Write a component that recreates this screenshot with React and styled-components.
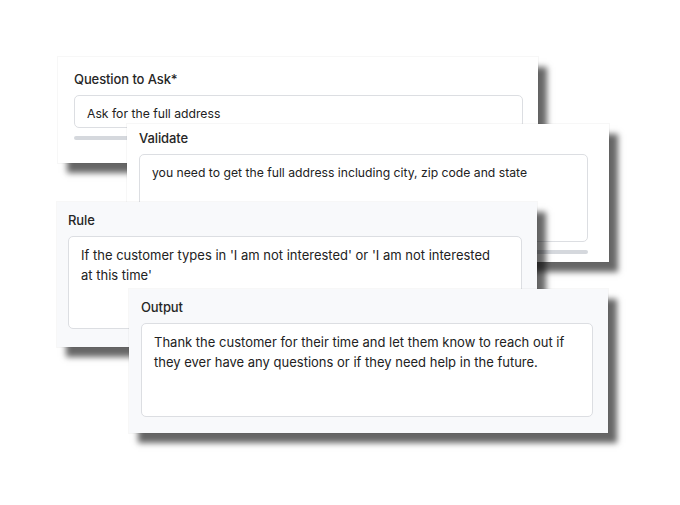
import styled, { createGlobalStyle } from "styled-components";

const GlobalStyle = createGlobalStyle`
  html, body {
    margin: 0;
    padding: 0;
    background: #ffffff;
  }
  body {
    font-family: "Inter", "Noto Sans", sans-serif;
    color: #222222;
  }
`;

const cards = [
  {
    label: "Question to Ask*",
    value: "Ask for the full address",
    x: 58, y: 57, w: 480, h: 106,
    pad: "14px 15px 0 16px",
    field: 33,
    size: 12.2,
    bar: true,
    tint: false,
  },
  {
    label: "Validate",
    value: "you need to get the full address including city, zip code and state",
    x: 127, y: 124, w: 482, h: 138,
    pad: "6px 21px 0 12px",
    field: 88,
    size: 12.2,
    bar: true,
    tint: false,
  },
  {
    label: "Rule",
    value:
      "If the customer types in 'I am not interested' or 'I am not interested\nat this time'",
    x: 57, y: 202, w: 480, h: 145,
    pad: "10px 15px 0 11px",
    field: 93,
    size: 13,
    bar: false,
    tint: true,
  },
  {
    label: "Output",
    value:
      "Thank the customer for their time and let them know to reach out if\nthey ever have any questions or if they need help in the future.",
    x: 129, y: 289, w: 479, h: 144,
    pad: "10px 15px 0 12px",
    field: 94,
    size: 13,
    bar: false,
    tint: true,
  },
];

export default function App() {
  return (
    <>
      <GlobalStyle />
      <Canvas>
        {cards.map((c) => (
          <Card
            key={c.label}
            $x={c.x}
            $y={c.y}
            $w={c.w}
            $h={c.h}
            $pad={c.pad}
            $tint={c.tint}
          >
            <Label>{c.label}</Label>
            <Field $h={c.field} $size={c.size}>
              {c.value}
            </Field>
            {c.bar && <Bar />}
          </Card>
        ))}
      </Canvas>
    </>
  );
}

const Canvas = styled.div`
  position: relative;
  width: 680px;
  height: 505px;
  overflow: hidden;
  background: #ffffff;
`;

const Card = styled.div`
  position: absolute;
  left: ${(p) => p.$x}px;
  top: ${(p) => p.$y}px;
  width: ${(p) => p.$w}px;
  height: ${(p) => p.$h}px;
  box-sizing: border-box;
  padding: ${(p) => p.$pad};
  display: flex;
  flex-direction: column;
  background: ${(p) => (p.$tint ? "#f8f9fb" : "#ffffff")};
  box-shadow: 0 0 0 1px rgba(0, 0, 0, 0.03), 9px 10px 6px rgba(0, 0, 0, 0.6);
`;

const Label = styled.div`
  font-size: 13px;
  font-weight: 500;
  line-height: 16px;
  letter-spacing: -0.1px;
  color: #262626;
  margin-bottom: 8px;
`;

const Field = styled.div`
  box-sizing: border-box;
  height: ${(p) => p.$h}px;
  padding: 8px 12px 7px 12px;
  background: #ffffff;
  border: 1px solid #dcdee2;
  border-radius: 5px;
  font-size: ${(p) => p.$size}px;
  line-height: 20px;
  white-space: pre-line;
  color: #222222;
`;

const Bar = styled.div`
  height: 4px;
  margin-top: 8px;
  border-radius: 2px;
  background: #d5d8dd;
`;
